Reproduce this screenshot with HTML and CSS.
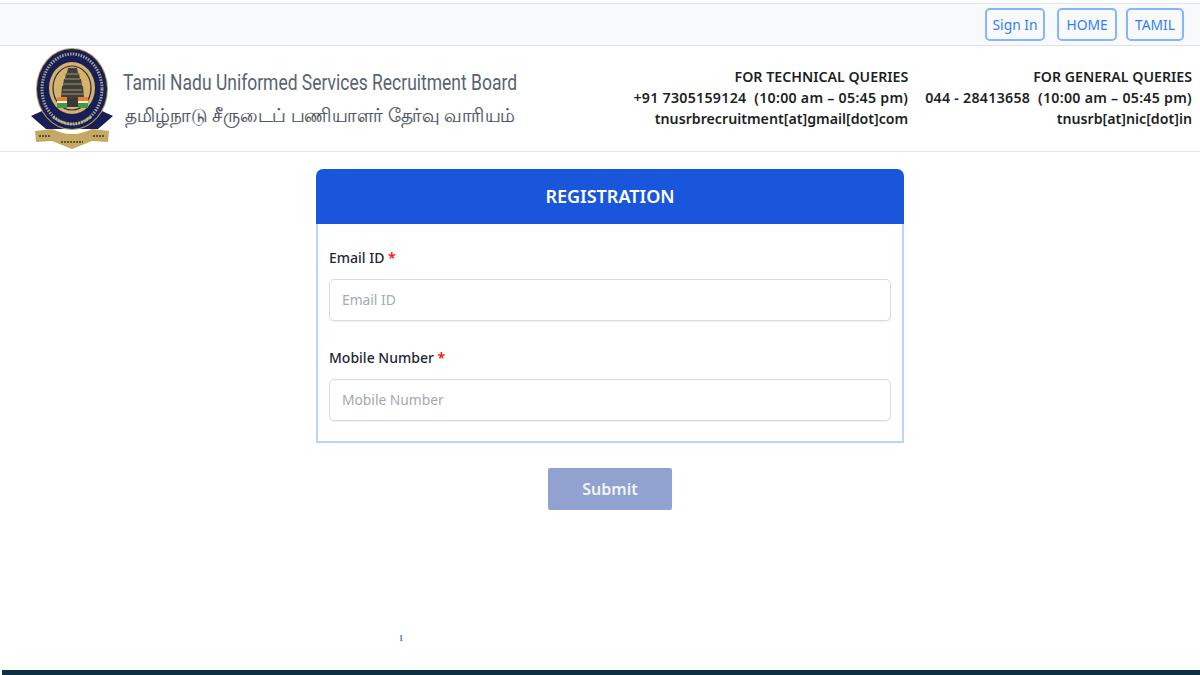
FILE: index.html
```html
<!DOCTYPE html>
<html lang="en">
<head>
<meta charset="utf-8">
<title>TNUSRB Registration</title>
<link rel="stylesheet" href="styles.css">
</head>
<body>
<nav class="topbar">
  <a class="topbtn btn-signin">Sign In</a>
  <a class="topbtn btn-home">HOME</a>
  <a class="topbtn btn-tamil">TAMIL</a>
</nav>
<header class="masthead">
  <div class="brand">
    <svg class="emblem" viewBox="0 0 84 104" width="84" height="104" aria-hidden="true">
      <path d="M1 69 L12 64 L72 64 L83 69 L68 82 L16 82 Z" fill="#171f56"/>
      <path d="M5 84 L22 82 Q42 92 62 82 L79 84 L78 95 L62 94 L42 102 L22 94 L6 95 Z" fill="#c5a862"/>
      <path d="M9 89 H21 M31 95 H53 M63 89 H75" stroke="#5e5336" stroke-width="2" stroke-dasharray="2 1"/>
      <ellipse cx="42" cy="42" rx="36" ry="41" fill="#b99c55"/>
      <ellipse cx="42" cy="42" rx="35" ry="40" fill="#171f56"/>
      <ellipse cx="42" cy="42" rx="30" ry="35" fill="none" stroke="#a8a691" stroke-width="3" stroke-dasharray="1.500 1.200"/>
      <ellipse cx="42" cy="41" rx="23" ry="26" fill="#d6b26a"/>
      <ellipse cx="42" cy="41" rx="19" ry="22" fill="none" stroke="#1d2a55" stroke-width="1.200"/>
      <path d="M38 21 H47 L48 26 H49 L50 32 H51 L52 39 H53 L54 51 H31 L32 39 H33 L34 32 H35 L36 26 H37 Z" fill="#3f3f3c"/>
      <path d="M36 27 H49 M35 32 H50 M34 37 H51 M33 43 H52 M32 47 H53" stroke="#a5946b" stroke-width="1"/>
      <path d="M31 51 H54 V60 H31 Z" fill="#3a3a34"/>
      <path d="M27 50 H37 V54 H27 Z" fill="#e5812d"/><path d="M27 54 H37 V56 H27 Z" fill="#f5f1e2"/><path d="M27 56 H37 V61 H27 Z" fill="#3e9a48"/>
      <path d="M48 50 H58 V54 H48 Z" fill="#e5812d"/><path d="M48 54 H58 V56 H48 Z" fill="#f5f1e2"/><path d="M48 56 H58 V61 H48 Z" fill="#3e9a48"/>
      <path d="M23 70 Q42 84 61 70" fill="none" stroke="#c9b98a" stroke-width="2.500" stroke-dasharray="2 1"/>
    </svg>
    <div class="brand-text">
      <svg class="brand-svg" viewBox="0 0 500 70" width="500" height="70">
        <text class="brand-en" x="3" y="26" textLength="394" lengthAdjust="spacingAndGlyphs">Tamil Nadu Uniformed Services Recruitment Board</text>
        <text class="brand-ta" x="5" y="58" textLength="390" lengthAdjust="spacingAndGlyphs" lang="ta">தமிழ்நாடு சீருடைப் பணியாளர் தேர்வு வாரியம்</text>
      </svg>
    </div>
  </div>
  <div class="contacts">
    <div class="contact">
      <div>FOR TECHNICAL QUERIES</div>
      <div class="pre">+91 7305159124  (10:00 am – 05:45 pm)</div>
      <div>tnusrbrecruitment[at]gmail[dot]com</div>
    </div>
    <div class="contact">
      <div>FOR GENERAL QUERIES</div>
      <div class="pre">044 - 28413658  (10:00 am – 05:45 pm)</div>
      <div>tnusrb[at]nic[dot]in</div>
    </div>
  </div>
</header>
<main class="content">
  <section class="card">
    <h1 class="card-head">REGISTRATION</h1>
    <div class="card-body">
      <label class="field">
        <span class="field-label">Email ID <em class="req">*</em></span>
        <input class="field-input" type="text" placeholder="Email ID">
      </label>
      <label class="field">
        <span class="field-label">Mobile Number <em class="req">*</em></span>
        <input class="field-input" type="text" placeholder="Mobile Number">
      </label>
    </div>
  </section>
  <button class="submit" type="button">Submit</button>
</main>
<div class="pager"><span class="page-num">1</span></div>
<footer class="footbar"></footer>
</body>
</html>
```
FILE: styles.css
```css
* { box-sizing: border-box; }
html, body { margin: 0; height: 675px; overflow: hidden; }
body {
  padding-top: 3px;
  background: #fff;
  color: #212529;
  font-family: "Noto Sans", "Open Sans", sans-serif;
  display: flex;
  flex-direction: column;
}
.topbar {
  height: 43px;
  background: #f8f9fa;
  border-top: 1px solid #e4e6e9;
  border-bottom: 1px solid #dee2e6;
  display: flex;
  justify-content: flex-end;
  align-items: center;
  padding-right: 16px;
}
.topbtn {
  height: 33px;
  display: flex;
  align-items: center;
  justify-content: center;
  border: 2px solid #85b5fc;
  border-radius: 5px;
  color: #2f7ffa;
  font-size: 13.8px;
}
.btn-signin { width: 60px; }
.btn-home { width: 60px; margin-left: 12px; }
.btn-tamil { width: 58px; margin-left: 9px; }
.masthead {
  height: 106px;
  border-bottom: 1px solid #e3e5e8;
  display: flex;
  justify-content: space-between;
  align-items: center;
  padding: 0 8px 0 30px;
}
.brand { display: flex; align-items: center; }
.emblem { display: block; }
.brand-text { margin-left: 6px; }
.brand-svg { display: block; }
.brand-en { font-family: "Roboto", sans-serif; font-size: 22px; fill: #58646f; }
.brand-ta { font-family: "Noto Sans", sans-serif; font-size: 19px; fill: #4d5660; stroke: #4d5660; stroke-width: .2px; }
.contacts { display: flex; gap: 17px; margin-top: -3px; }
.contact {
  text-align: right;
  font-size: 14.2px;
  font-weight: 600;
  line-height: 21px;
  color: #1c1f23;
}
.pre { white-space: pre; letter-spacing: .27px; }
.content {
  height: 367px;
  padding: 17px 0 0 20px;
  display: flex;
  flex-direction: column;
  align-items: center;
}
.card { width: 588px; }
.card-head {
  margin: 0;
  height: 55px;
  padding-bottom: 1px;
  background: #1a56db;
  border-radius: 7px 7px 0 0;
  color: #fff;
  font-size: 18px;
  font-weight: 600;
  display: flex;
  align-items: center;
  justify-content: center;
}
.card-body {
  height: 219px;
  border: 2px solid #bcd4fb;
  border-top: 0;
  padding: 23px 11px 0;
  display: flex;
  flex-direction: column;
  gap: 26px;
}
.field { display: flex; flex-direction: column; gap: 11px; }
.field-label { font-size: 14px; font-weight: 500; line-height: 21px; color: #1f2937; }
.req { color: #f00; font-style: normal; }
.field-input {
  height: 42px;
  border: 1px solid #d9dbe0;
  border-radius: 5px;
  padding: 0 12px 2px;
  font: 13.8px "Noto Sans", sans-serif;
  background: #fff;
  box-shadow: 0 1px 1px rgba(0,0,0,.06);
}
.field-input::placeholder { color: #a3a8b2; opacity: 1; }
.submit {
  margin-top: 25px;
  width: 124px;
  height: 42px;
  border: 0;
  border-radius: 2px;
  background: #91a2d0;
  color: #f3f4f8;
  font: 600 16px "Noto Sans", sans-serif;
}
.pager { height: 151px; padding: 114px 0 0 399px; }
.page-num { display: block; font: 600 8px/12px "Liberation Serif", serif; color: #3a72c8; }
.footbar { height: 5px; margin-left: 2px; background: #0b3142; }
```
